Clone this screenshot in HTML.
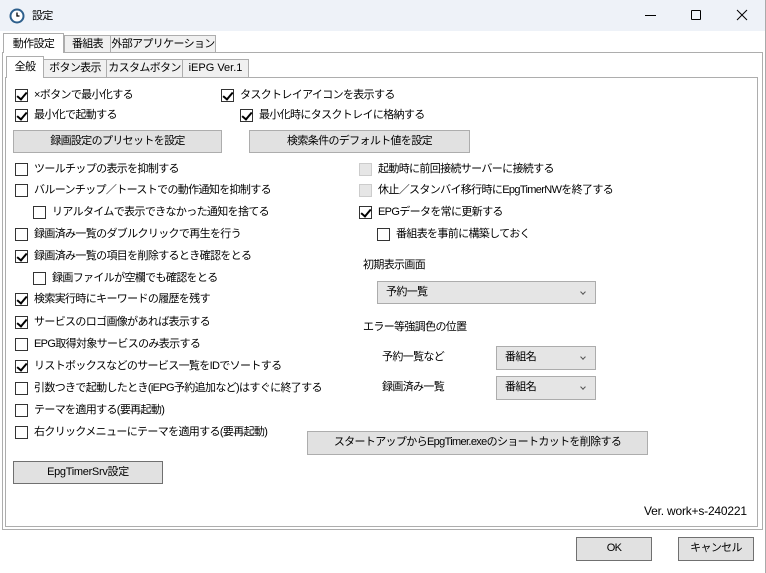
<!DOCTYPE html>
<html><head><meta charset="utf-8"><style>
*{box-sizing:border-box;margin:0;padding:0}
body{width:766px;height:573px;overflow:hidden;background:#fff;font-family:"Liberation Sans","Noto Sans CJK JP",sans-serif;font-size:11px;letter-spacing:-0.65px;color:#000;position:relative}
.a{position:absolute;white-space:nowrap}
.t{position:absolute;line-height:14px;white-space:nowrap}
.cb{position:absolute;width:13px;height:13px;border:1px solid #333;background:#fff}
.cb.d{border-color:#ccc;background:#e6e6e6}
.cb.c::after{content:"";position:absolute;left:3px;top:0px;width:4px;height:8px;border:solid #000;border-width:0 2px 2px 0;transform:rotate(40deg)}
.btn{position:absolute;background:#e1e1e1;border:1px solid #adadad;text-align:center;line-height:21px}
.cmb{position:absolute;background:#e5e5e5;border:1px solid #acacac;line-height:21px;padding-left:8px}
.cmb::after{content:"";position:absolute;right:10px;top:8px;width:3px;height:3px;border:solid #555;border-width:0 1px 1px 0;transform:rotate(45deg)}
.tab{position:absolute;background:#f0f0f0;border:1px solid #adadad;border-bottom:none;text-align:center;line-height:17px}
.tab.s{background:#fff;z-index:2}
</style></head><body>
<div class="a" style="left:0;top:0;width:766px;height:31px;background:#eef2f8"></div>
<svg class="a" style="left:9px;top:8px" width="16" height="16" viewBox="0 0 16 16"><circle cx="8" cy="8" r="7.5" fill="#2d5f8c"/><circle cx="8" cy="8" r="5.5" fill="#fff"/><path d="M8 4.5V8h2.5" stroke="#000" stroke-width="1.3" fill="none"/></svg>
<div class="t" style="left:32px;top:9px">設定</div>
<div class="a" style="left:645px;top:15px;width:11px;height:1px;background:#000"></div>
<div class="a" style="left:691px;top:10px;width:10px;height:10px;border:1px solid #000;border-radius:1px"></div>
<svg class="a" style="left:736px;top:9px" width="12" height="12"><path d="M1 1L11 11M11 1L1 11" stroke="#000" stroke-width="1"/></svg>

<div class="a" style="left:2px;top:52px;width:761px;height:478px;border:1px solid #adadad"></div>
<div class="tab s" style="left:3px;top:33px;width:61px;height:20px;line-height:20px">動作設定</div>
<div class="tab" style="left:64px;top:35px;width:47px;height:17px">番組表</div>
<div class="tab" style="left:110px;top:35px;width:106px;height:17px">外部アプリケーション</div>

<div class="a" style="left:5px;top:77px;width:753px;height:450px;border:1px solid #adadad"></div>
<div class="tab s" style="left:6px;top:56px;width:38px;height:22px;line-height:21px">全般</div>
<div class="tab" style="left:43px;top:59px;width:64px;height:18px">ボタン表示</div>
<div class="tab" style="left:106px;top:59px;width:77px;height:18px">カスタムボタン</div>
<div class="tab" style="left:182px;top:59px;width:67px;height:18px;letter-spacing:0">iEPG Ver.1</div>

<div class="cb c" style="left:15px;top:89px"></div><div class="t" style="left:34px;top:88px">×ボタンで最小化する</div>
<div class="cb c" style="left:221px;top:89px"></div><div class="t" style="left:240px;top:88px">タスクトレイアイコンを表示する</div>
<div class="cb c" style="left:15px;top:109px"></div><div class="t" style="left:34px;top:108px">最小化で起動する</div>
<div class="cb c" style="left:240px;top:109px"></div><div class="t" style="left:259px;top:108px">最小化時にタスクトレイに格納する</div>
<div class="btn" style="left:13px;top:130px;width:209px;height:23px">録画設定のプリセットを設定</div>
<div class="btn" style="left:249px;top:130px;width:221px;height:23px">検索条件のデフォルト値を設定</div>

<div class="cb" style="left:15px;top:163px"></div><div class="t" style="left:34px;top:162px">ツールチップの表示を抑制する</div>
<div class="cb" style="left:15px;top:184px"></div><div class="t" style="left:34px;top:183px">バルーンチップ／トーストでの動作通知を抑制する</div>
<div class="cb" style="left:33px;top:206px"></div><div class="t" style="left:52px;top:205px">リアルタイムで表示できなかった通知を捨てる</div>
<div class="cb" style="left:15px;top:228px"></div><div class="t" style="left:34px;top:227px">録画済み一覧のダブルクリックで再生を行う</div>
<div class="cb c" style="left:15px;top:250px"></div><div class="t" style="left:34px;top:249px">録画済み一覧の項目を削除するとき確認をとる</div>
<div class="cb" style="left:33px;top:272px"></div><div class="t" style="left:52px;top:271px">録画ファイルが空欄でも確認をとる</div>
<div class="cb c" style="left:15px;top:293px"></div><div class="t" style="left:34px;top:292px">検索実行時にキーワードの履歴を残す</div>
<div class="cb c" style="left:15px;top:316px"></div><div class="t" style="left:34px;top:315px">サービスのロゴ画像があれば表示する</div>
<div class="cb" style="left:15px;top:338px"></div><div class="t" style="left:34px;top:337px">EPG取得対象サービスのみ表示する</div>
<div class="cb c" style="left:15px;top:360px"></div><div class="t" style="left:34px;top:359px">リストボックスなどのサービス一覧をIDでソートする</div>
<div class="cb" style="left:15px;top:382px"></div><div class="t" style="left:34px;top:381px">引数つきで起動したとき(iEPG予約追加など)はすぐに終了する</div>
<div class="cb" style="left:15px;top:404px"></div><div class="t" style="left:34px;top:403px">テーマを適用する(要再起動)</div>
<div class="cb" style="left:15px;top:426px"></div><div class="t" style="left:34px;top:425px">右クリックメニューにテーマを適用する(要再起動)</div>

<div class="cb d" style="left:359px;top:163px"></div><div class="t" style="left:378px;top:162px">起動時に前回接続サーバーに接続する</div>
<div class="cb d" style="left:359px;top:184px"></div><div class="t" style="left:378px;top:183px">休止／スタンバイ移行時にEpgTimerNWを終了する</div>
<div class="cb c" style="left:359px;top:206px"></div><div class="t" style="left:378px;top:205px">EPGデータを常に更新する</div>
<div class="cb" style="left:377px;top:228px"></div><div class="t" style="left:396px;top:227px">番組表を事前に構築しておく</div>
<div class="t" style="left:363px;top:258px">初期表示画面</div>
<div class="cmb" style="left:377px;top:281px;width:219px;height:23px">予約一覧</div>
<div class="t" style="left:363px;top:320px">エラー等強調色の位置</div>
<div class="t" style="left:382px;top:350px">予約一覧など</div>
<div class="cmb" style="left:496px;top:346px;width:100px;height:24px">番組名</div>
<div class="t" style="left:382px;top:380px">録画済み一覧</div>
<div class="cmb" style="left:496px;top:376px;width:100px;height:24px">番組名</div>
<div class="btn" style="left:307px;top:431px;width:341px;height:24px">スタートアップからEpgTimer.exeのショートカットを削除する</div>
<div class="btn" style="left:13px;top:461px;width:150px;height:23px;border-color:#707070;letter-spacing:-0.3px">EpgTimerSrv設定</div>
<div class="t" style="left:644px;top:504px;font-size:12px;letter-spacing:-0.2px">Ver. work+s-240221</div>
<div class="btn" style="left:576px;top:537px;width:76px;height:24px;border-color:#707070">OK</div>
<div class="btn" style="left:678px;top:537px;width:76px;height:24px;border-color:#707070">キャンセル</div>
<div class="a" style="left:765px;top:0;width:1px;height:573px;background:#aaa"></div>
</body></html>
